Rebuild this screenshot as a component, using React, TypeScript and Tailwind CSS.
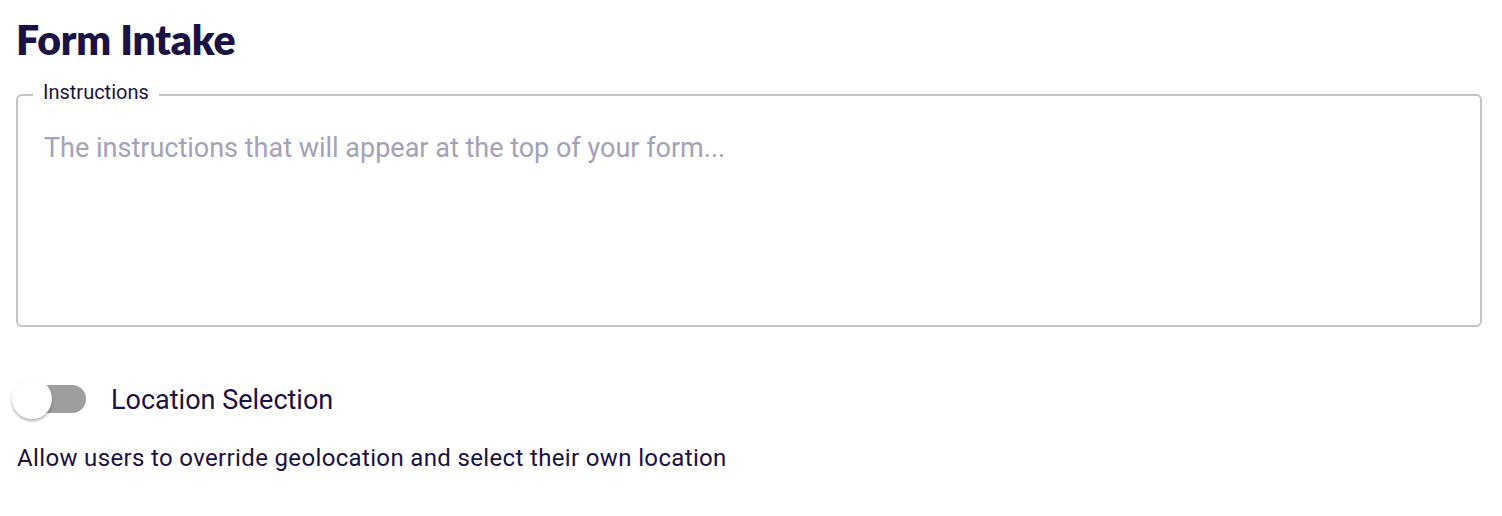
import React, { useState } from 'react';

const App = () => {
  const [enabled, setEnabled] = useState(false);

  return (
    <div className="min-h-screen bg-white pl-4 pr-5 pt-4 font-['Roboto',sans-serif] text-[#1a1145]">
      {/* Header */}
      <h1 className="font-['Lato',sans-serif] text-[41px] font-extrabold leading-[48px] tracking-[-0.2px]">Form Intake</h1>

      {/* Instructions field */}
      <fieldset className="mt-[19px] h-[244px] rounded-md border-2 border-[#c4c4c4] px-[26px]">
        <legend className="relative -top-[3px] -ml-[11px] px-[10px] text-[20px] leading-[24px]">Instructions</legend>
        <textarea
          className="mt-[25px] h-[170px] w-full resize-none text-[27px] leading-[32px] text-[#1a1145] outline-none placeholder:text-[#a4a1ba]"
          placeholder="The instructions that will appear at the top of your form..."
        />
      </fieldset>

      {/* Location toggle */}
      <div className="mt-[51px] flex items-center gap-[25px]">
        <button
          onClick={() => setEnabled(!enabled)}
          className="relative flex h-[40px] w-[74px] shrink-0 items-center -ml-1"
        >
          <span className={`ml-2 h-[28px] w-[66px] rounded-full ${enabled ? 'bg-[#9b8fe0]' : 'bg-[#9e9e9e]'}`} />
          <span
            className={`absolute top-0 h-[40px] w-[40px] rounded-full bg-white shadow-[0_2px_3px_rgba(0,0,0,0.3)] ${enabled ? 'left-[34px]' : 'left-0'}`}
          />
        </button>
        <span className="pt-[2px] text-[27px] leading-[40px]">Location Selection</span>
      </div>
      <p className="mt-[22px] pl-px text-[24px] leading-[32px] tracking-[0.35px]">
        Allow users to override geolocation and select their own location
      </p>
    </div>
  );
};

export default App;
